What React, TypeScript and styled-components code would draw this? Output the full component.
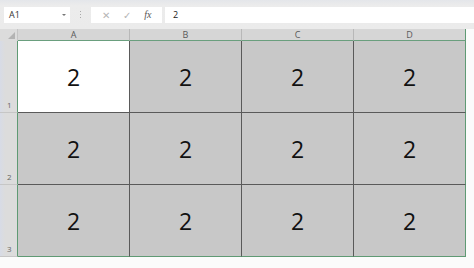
import React from 'react'
import styled, { createGlobalStyle } from 'styled-components'

const GlobalStyle = createGlobalStyle`
  html, body {
    margin: 0;
    padding: 0;
    background: #ffffff;
    font-family: 'Open Sans', 'Liberation Sans', sans-serif;
  }
`

const Page = styled.div`
  width: 474px;
  height: 268px;
  display: flex;
  flex-direction: column;
  overflow: hidden;
  background: #fbfbfb;
`

const FormulaBar = styled.div`
  height: 29px;
  display: flex;
  align-items: center;
  padding: 0 0 0 4px;
  box-sizing: border-box;
  background: linear-gradient(#e4e6ea, #ececec 20%, #ebebeb);
`

const NameBox = styled.div`
  width: 66px;
  height: 16px;
  background: #fff;
  display: flex;
  align-items: center;
  justify-content: space-between;
  padding: 0 4px 0 5px;
  box-sizing: border-box;
  font-size: 9px;
  color: #333;
`

const Caret = styled.span`
  width: 0;
  height: 0;
  border-left: 2px solid transparent;
  border-right: 2px solid transparent;
  border-top: 2px solid #777;
`

const Dots = styled.div`
  width: 21px;
  display: flex;
  flex-direction: column;
  align-items: center;
  gap: 2px;
  span {
    width: 1px;
    height: 1px;
    background: #aaa;
  }
`

const ActionBox = styled.div`
  width: 71px;
  height: 16px;
  background: #fff;
  display: flex;
  align-items: center;
  justify-content: space-around;
  padding: 0 4px;
  box-sizing: border-box;
  color: #b5b5b5;
  font-size: 10px;
`

const Fx = styled.span`
  font-family: 'Liberation Serif', serif;
  font-style: italic;
  font-size: 10px;
  color: #555;
`

const FormulaInput = styled.div`
  flex: 1;
  height: 16px;
  margin-left: 3px;
  background: #fff;
  display: flex;
  align-items: center;
  padding-left: 8px;
  font-size: 9px;
  color: #222;
`

const Sheet = styled.div`
  display: grid;
  grid-template-columns: 18px repeat(4, 112px);
  grid-template-rows: 12px repeat(3, 72px);
`

const Corner = styled.div`
  background: #dcdcdc;
  position: relative;
  border-right: 1px solid #c4c4c4;
  &::after {
    content: '';
    position: absolute;
    right: 2px;
    bottom: 2px;
    border-left: 7px solid transparent;
    border-bottom: 7px solid #b3b3b3;
  }
`

const ColHead = styled.div<{ $last?: boolean }>`
  background: #d6d6d6;
  border-right: 1px solid ${(p) => (p.$last ? '#5f9a74' : '#b8b8b8')};
  border-bottom: 1px solid #6a9f7e;
  display: flex;
  align-items: center;
  justify-content: center;
  font-size: 9px;
  color: #5a5a5a;
  box-sizing: border-box;
`

const RowHead = styled.div`
  background: linear-gradient(90deg, #d7dbe6, #dcdcdc 30%);
  border-right: 1px solid #5f9a74;
  border-bottom: 1px solid #c6c6c6;
  display: flex;
  align-items: flex-end;
  justify-content: flex-start;
  padding: 0 0 2px 7px;
  font-size: 8px;
  color: #666;
  box-sizing: border-box;
`

const Cell = styled.div<{ $active?: boolean; $col: number; $row: number }>`
  background: ${(p) => (p.$active ? '#ffffff' : '#c8c8c8')};
  box-sizing: border-box;
  border-right: 1px solid ${(p) => (p.$col === 3 ? '#5f9a74' : '#5a5a5a')};
  border-bottom: 1px solid ${(p) => (p.$row === 2 ? '#5f9a74' : '#5a5a5a')};
  display: flex;
  align-items: center;
  justify-content: center;
  font-family: 'Open Sans', 'Liberation Sans', sans-serif;
  font-size: 23px;
  color: #111;
`

const cols = ['A', 'B', 'C', 'D']
const rows = [1, 2, 3]

export default function App() {
  return (
    <Page>
      <GlobalStyle />
      <FormulaBar>
        <NameBox>
          A1
          <Caret />
        </NameBox>
        <Dots>
          <span />
          <span />
          <span />
        </Dots>
        <ActionBox>
          <span>✕</span>
          <span>✓</span>
          <Fx>fx</Fx>
        </ActionBox>
        <FormulaInput>2</FormulaInput>
      </FormulaBar>
      <Sheet>
        <Corner />
        {cols.map((c, i) => (
          <ColHead key={c} $last={i === 3}>
            {c}
          </ColHead>
        ))}
        {rows.map((r, ri) => (
          <React.Fragment key={r}>
            <RowHead>{r}</RowHead>
            {cols.map((c, ci) => (
              <Cell key={c} $col={ci} $row={ri} $active={ri === 0 && ci === 0}>
                2
              </Cell>
            ))}
          </React.Fragment>
        ))}
      </Sheet>
    </Page>
  )
}
